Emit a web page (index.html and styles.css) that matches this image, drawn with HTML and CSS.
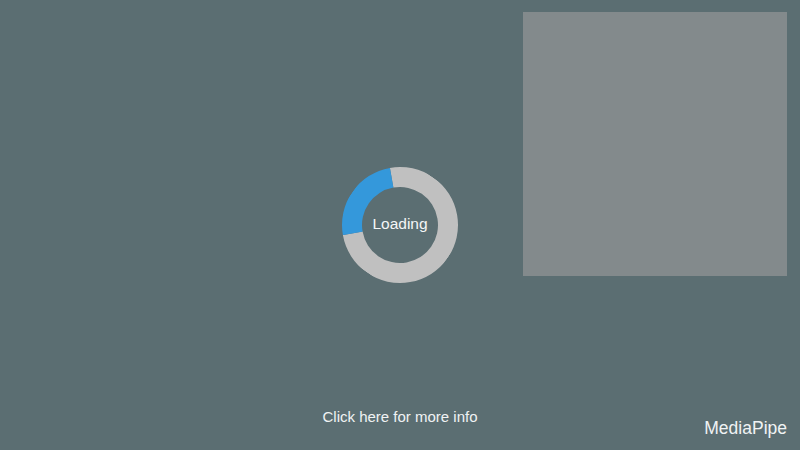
FILE: index.html
```html
<!DOCTYPE html>
<html>
<head>
<meta charset="utf-8">
<link rel="stylesheet" href="styles.css">
</head>
<body>
<div class="app">
  <div class="stage">
    <div class="loader">
      <div class="ring"></div>
      <span class="label">Loading</span>
    </div>
  </div>
  <div class="info">Click here for more info</div>
  <div class="preview"></div>
  <div class="brand">MediaPipe</div>
</div>
</body>
</html>
```
FILE: styles.css
```css
html, body {
  margin: 0;
  padding: 0;
  width: 800px;
  height: 450px;
  overflow: hidden;
  background: #5b6e72;
  font-family: "Liberation Sans", Arial, sans-serif;
}
.app {
  position: relative;
  width: 800px;
  height: 450px;
  display: flex;
  flex-direction: column;
}
.stage {
  height: 450px;
  display: flex;
  align-items: center;
  justify-content: center;
}
.loader {
  position: relative;
  width: 116px;
  height: 116px;
  display: flex;
  align-items: center;
  justify-content: center;
}
.ring {
  position: absolute;
  inset: 0;
  box-sizing: border-box;
  border-radius: 50%;
  border: 20px solid #c0c0c0;
  border-left-color: #3498db;
  transform: rotate(35deg);
}
.label {
  position: relative;
  top: -1px;
  color: #f4f6f7;
  font-size: 15.5px;
}
.info {
  position: absolute;
  left: 0;
  right: 0;
  top: 408px;
  text-align: center;
  color: #f0f3f4;
  font-size: 15px;
}
.preview {
  position: absolute;
  top: 12px;
  right: 13px;
  width: 264px;
  height: 264px;
  background: #838a8c;
}
.brand {
  position: absolute;
  right: 13px;
  top: 418px;
  color: #f0f3f4;
  font-size: 17.5px;
}
```
